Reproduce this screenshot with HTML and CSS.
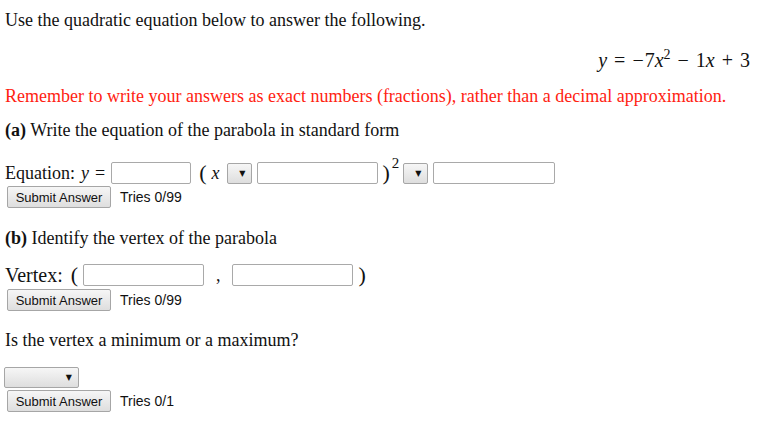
FILE: index.html
```html
<!DOCTYPE html>
<html lang="en">
<head>
  <meta charset="UTF-8" />
  <title>Quadratic Equation</title>
  <link rel="stylesheet" href="styles.css">
</head>
<body>
  <div class="problem">
    <p class="intro">Use the quadratic equation below to answer the following.</p>
    <div class="display-eq">
      <span class="mi">y</span><span class="mo">=</span><span class="neg">&minus;</span>7<span class="mi">x</span><sup>2</sup><span class="mo">&minus;</span>1<span class="mi">x</span><span class="mo">+</span>3
    </div>
    <p class="warn">Remember to write your answers as exact numbers (fractions), rather than a decimal approximation.</p>

    <p class="part part-a"><b>(a)</b> Write the equation of the parabola in standard form</p>
    <div class="answer-row">
      <span class="lbl">Equation:</span>
      <span class="mi yvar">y</span><span class="eq-sign">=</span>
      <input type="text" class="ans w80" />
      <span class="paren">(</span><span class="mi xvar">x</span>
      <span class="pick small">&#9660;</span>
      <input type="text" class="ans w121" />
      <span class="paren close">)</span><sup class="sq">2</sup>
      <span class="pick small">&#9660;</span>
      <input type="text" class="ans w122" />
    </div>
    <div class="submit-row">
      <button class="submit">Submit Answer</button>
      <span class="tries">Tries 0/99</span>
    </div>

    <p class="part part-b"><b>(b)</b> Identify the vertex of the parabola</p>
    <div class="answer-row vertex">
      <span class="lbl">Vertex:</span>
      <span class="paren">(</span>
      <input type="text" class="ans w121" />
      <span class="comma">,</span>
      <input type="text" class="ans w121" />
      <span class="paren close">)</span>
    </div>
    <div class="submit-row">
      <button class="submit">Submit Answer</button>
      <span class="tries">Tries 0/99</span>
    </div>

    <p class="part part-c">Is the vertex a minimum or a maximum?</p>
    <div class="pick wide">&#9660;</div>
    <div class="submit-row">
      <button class="submit">Submit Answer</button>
      <span class="tries">Tries 0/1</span>
    </div>
  </div>
</body>
</html>
```

FILE: styles.css
```css
body {
  margin: 0;
  background: #fff;
  color: #111;
  font-family: "Liberation Serif", "Times New Roman", serif;
  font-size: 18px;
}
.problem {
  padding: 0 14px 0 5px;
}
p {
  margin: 0;
  line-height: 22px;
}
.intro {
  padding-top: 9px;
}
.display-eq {
  text-align: right;
  font-family: "Liberation Serif", serif;
  font-size: 20px;
  margin-top: 17px;
  line-height: 24px;
}
.display-eq sup {
  font-size: 14px;
  line-height: 0;
}
.mi {
  font-family: "Liberation Serif", serif;
  font-style: italic;
}
.mo {
  padding: 0 7px;
}
.neg {
  padding-right: 1px;
}
.warn {
  color: #f21;
  margin-top: 13px;
}
.part-a {
  margin-top: 12px;
}
.answer-row {
  display: flex;
  align-items: center;
  margin-top: 21px;
  height: 22px;
}
.yvar {
  margin-left: 6px;
}
.eq-sign {
  margin: 0 6px 0 6px;
}
.paren {
  font-size: 22px;
  margin: 0 5px 0 8px;
}
.paren.close {
  margin: 0 2px 0 4px;
}
.xvar {
  margin-right: 8px;
  font-size: 18px;
}
.sq {
  font-size: 15px;
  align-self: flex-start;
  line-height: 15px;
  margin-top: -6px;
  margin-right: 4px;
}
.ans {
  box-sizing: border-box;
  height: 22px;
  border: 1px solid #a9a9a9;
  border-radius: 2px;
  margin: 0;
  padding: 0;
  background: #fff;
}
.w80 { width: 80px; }
.w121 { width: 121px; }
.w122 { width: 122px; }
.pick {
  box-sizing: border-box;
  height: 21px;
  border: 1px solid #a6a6a6;
  border-radius: 2px;
  background: linear-gradient(#f6f6f6, #dedede);
  font-family: "DejaVu Sans", sans-serif;
  font-size: 8px;
  color: #111;
  display: flex;
  align-items: center;
  justify-content: flex-end;
  padding-right: 6px;
}
.pick.small {
  width: 25px;
  margin-right: 5px;
}
.pick.wide {
  width: 75px;
  margin-top: 16px;
  margin-left: -1px;
}
.submit-row {
  display: flex;
  align-items: center;
  gap: 9px;
  margin-top: 2px;
  padding-left: 2px;
}
.submit {
  box-sizing: border-box;
  height: 22px;
  width: 104px;
  padding: 0;
  border: 1px solid #a6a6a6;
  border-radius: 2px;
  background: linear-gradient(#f6f6f6, #dedede);
  font-family: "Liberation Sans", Arial, sans-serif;
  font-size: 13px;
  color: #111;
}
.tries {
  font-family: "Liberation Sans", Arial, sans-serif;
  font-size: 14px;
}
.part-b {
  margin-top: 19px;
}
.vertex {
  margin-top: 15px;
  font-size: 20px;
}
.vertex .paren {
  margin: 0 5px 0 8px;
}
.vertex .paren.close {
  margin: 0 0 0 6px;
}
.comma {
  margin: 0 11px 0 12px;
  font-size: 18px;
}
.vertex + .submit-row {
  margin-top: 3px;
}
.part-c {
  margin-top: 18px;
}
```
